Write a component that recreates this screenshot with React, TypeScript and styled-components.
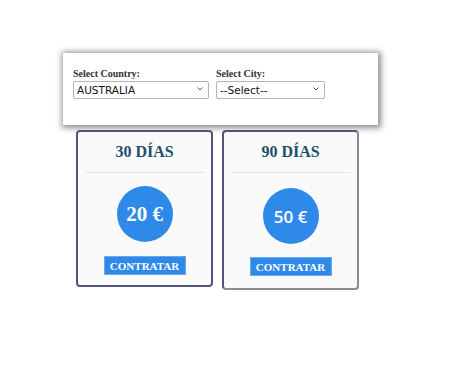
import React from 'react';
import styled, { createGlobalStyle } from 'styled-components';

const GlobalStyle = createGlobalStyle`
  body {
    margin: 0;
    background: #ffffff;
    font-family: "Liberation Serif", "Times New Roman", serif;
  }
`;

const Page = styled.div`
  padding: 53px 0 0 63px;
`;

const FilterPanel = styled.div`
  width: 315px;
  height: 72px;
  box-sizing: border-box;
  padding: 15px 10px 0 10px;
  background: #ffffff;
  box-shadow: 1px 1px 6px 2px rgba(0, 0, 0, 0.45);
  display: flex;
  gap: 7px;
`;

const Field = styled.div`
  display: flex;
  flex-direction: column;
`;

const Label = styled.label`
  font-size: 10px;
  font-weight: bold;
  color: #333333;
  line-height: 12px;
`;

const SelectWrap = styled.div`
  position: relative;
`;

const Select = styled.select<{ $width: number }>`
  appearance: none;
  width: ${(p) => p.$width}px;
  height: 18px;
  font-family: "DejaVu Sans", sans-serif;
  font-size: 10.5px;
  color: #111;
  border: 1px solid #b5b5b5;
  border-radius: 2px;
  background: #fff;
  padding: 0 3px;
  margin: 0;
`;

const Chevron = styled.svg`
  position: absolute;
  right: 6px;
  top: 7px;
  width: 6px;
  height: 4px;
  pointer-events: none;
`;

const Plans = styled.div`
  display: flex;
  gap: 9px;
  margin: 5px 0 0 13px;
  align-items: flex-start;
`;

const Card = styled.div<{ $height: number; $faded?: boolean }>`
  width: 137px;
  height: ${(p) => p.$height}px;
  box-sizing: border-box;
  background: #fafafa;
  border: 2px solid #55557a;
  border-color: ${(p) => (p.$faded ? '#55557a #8a8a9a #8a8a9a #55557a' : '#55557a')};
  border-radius: 4px;
  display: flex;
  flex-direction: column;
  align-items: center;
`;

const Title = styled.h2`
  margin: 10px 0 0;
  font-size: 16px;
  font-weight: bold;
  color: #1e4e6c;
  line-height: 20px;
`;

const Divider = styled.hr`
  width: 120px;
  border: 0;
  border-top: 1px solid #e6e6e6;
  margin: 10px 0 0;
`;

const Price = styled.div<{ $sans?: boolean; $top: number }>`
  width: 56px;
  height: 56px;
  margin-top: ${(p) => p.$top}px;
  border-radius: 50%;
  background: #2f89e8;
  color: #ffffff;
  display: flex;
  align-items: center;
  justify-content: center;
  font-family: ${(p) => (p.$sans ? '"Open Sans", sans-serif' : '"Liberation Serif", serif')};
  font-size: ${(p) => (p.$sans ? '17px' : '21px')};
  font-weight: ${(p) => (p.$sans ? '600' : 'bold')};
`;

const Button = styled.button<{ $top: number }>`
  margin-top: ${(p) => p.$top}px;
  width: 82px;
  height: 19px;
  border: 1px solid #6aa8ec;
  background: #2f89e8;
  color: #ffffff;
  font-family: "Liberation Serif", serif;
  font-weight: bold;
  font-size: 11px;
  padding: 0;
  cursor: pointer;
`;

const ChevronIcon = () => (
  <Chevron viewBox="0 0 6 4">
    <path d="M0.5 0.5 L3 3 L5.5 0.5" fill="none" stroke="#555" strokeWidth="1" />
  </Chevron>
);

export default function App() {
  return (
    <>
      <GlobalStyle />
      <Page>
        <FilterPanel>
          <Field>
            <Label>Select Country:</Label>
            <SelectWrap>
              <Select $width={136} defaultValue="AUSTRALIA">
                <option>AUSTRALIA</option>
              </Select>
              <ChevronIcon />
            </SelectWrap>
          </Field>
          <Field>
            <Label>Select City:</Label>
            <SelectWrap>
              <Select $width={109} defaultValue="--Select--">
                <option>--Select--</option>
              </Select>
              <ChevronIcon />
            </SelectWrap>
          </Field>
        </FilterPanel>
        <Plans>
          <Card $height={157}>
            <Title>30 DÍAS</Title>
            <Divider />
            <Price $top={13}>20 €</Price>
            <Button $top={14}>CONTRATAR</Button>
          </Card>
          <Card $height={160} $faded>
            <Title>90 DÍAS</Title>
            <Divider />
            <Price $sans $top={15}>50 €</Price>
            <Button $top={13}>CONTRATAR</Button>
          </Card>
        </Plans>
      </Page>
    </>
  );
}
